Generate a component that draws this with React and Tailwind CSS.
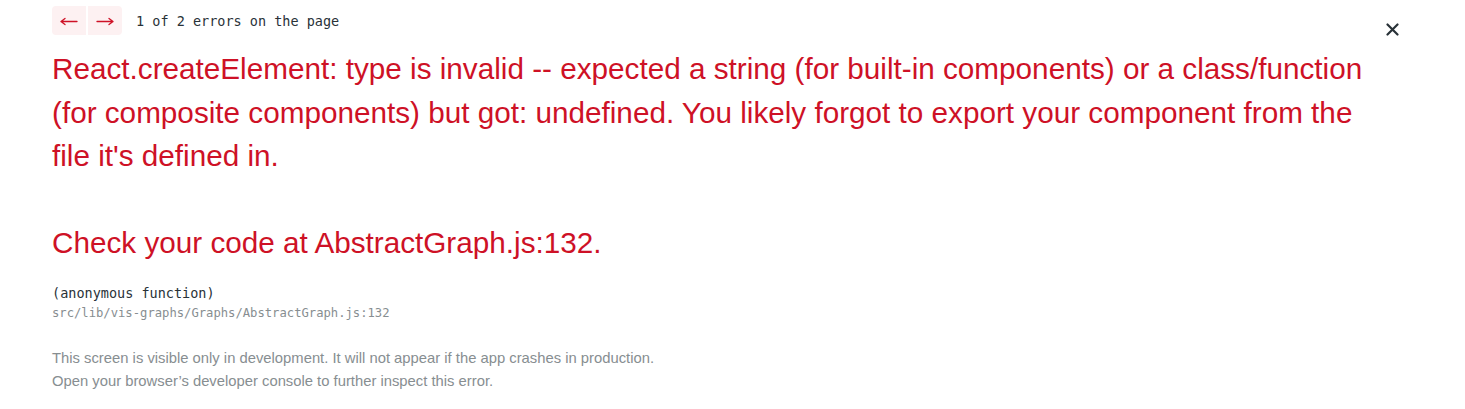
import React from 'react';

const Arrow = ({ flip }) => (
  <svg width="18" height="9" viewBox="0 0 18 9" className={flip ? 'rotate-180' : ''}>
    <path d="M1 4.5 H17 M1 4.5 L5 1.5 M1 4.5 L5 7.5" stroke="currentColor" strokeWidth="1.3" fill="none" strokeLinecap="round" />
  </svg>
);

const App = () => {
  return (
    <div className="w-[1465px] h-[409px] bg-white relative overflow-hidden">
      <div className="pl-[52px] pr-[100px] pt-[6px]">
        {/* error navigation */}
        <div className="flex items-center h-[29px]">
          <button className="w-[34px] h-[29px] bg-[#fdf1f2] text-[#ce1126] rounded-l-[4px] flex items-center justify-center pt-[1px]">
            <Arrow />
          </button>
          <button className="w-[34px] h-[29px] bg-[#fdf1f2] text-[#ce1126] rounded-r-[4px] ml-[2px] flex items-center justify-center pt-[1px]">
            <Arrow flip />
          </button>
          <span className="ml-[14px] pt-[1px] text-[13.5px] text-[#293238] font-['DejaVu_Sans_Mono','Liberation_Mono',monospace]">
            1 of 2 errors on the page
          </span>
        </div>

        {/* error message */}
        <div className="mt-[12px] text-[29.7px] leading-[43.5px] text-[#ce1126] font-['Liberation_Sans',Arial,sans-serif] whitespace-pre-wrap max-w-[1330px]">
          {"React.createElement: type is invalid -- expected a string (for built-in components) or a class/function (for composite components) but got: undefined. You likely forgot to export your component from the file it's defined in.\n\nCheck your code at AbstractGraph.js:132."}
        </div>

        {/* stack frame */}
        <div className="mt-[18px] font-['DejaVu_Sans_Mono','Liberation_Mono',monospace]">
          <div className="text-[13.5px] leading-[20px] text-[#293238]">(anonymous function)</div>
          <div className="text-[12.2px] leading-[21px] text-[#878e91]">src/lib/vis-graphs/Graphs/AbstractGraph.js:132</div>
        </div>

        {/* footer */}
        <div className="mt-[23px] text-[14.8px] leading-[23px] text-[#878e91] font-['Liberation_Sans',Arial,sans-serif]">
          <div>This screen is visible only in development. It will not appear if the app crashes in production.</div>
          <div>Open your browser’s developer console to further inspect this error.</div>
        </div>
      </div>

      {/* close button */}
      <button className="absolute right-[63px] top-[18px] w-[20px] h-[22px] flex items-center justify-center text-[#293238]">
        <svg width="13" height="13" viewBox="0 0 13 13">
          <path d="M1.5 1.5 L11.5 11.5 M11.5 1.5 L1.5 11.5" stroke="currentColor" strokeWidth="2.2" strokeLinecap="round" />
        </svg>
      </button>
    </div>
  );
};

export default App;
